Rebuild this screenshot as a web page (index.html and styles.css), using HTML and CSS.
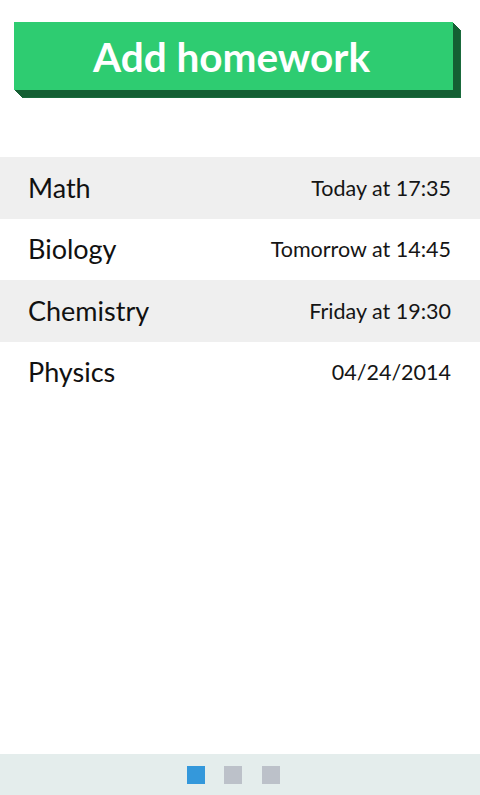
FILE: index.html
```html
<!DOCTYPE html>
<html>
<head>
<meta charset="utf-8">
<link rel="stylesheet" href="styles.css">
</head>
<body>
<div class="app">
  <div class="top">
    <button class="add-btn">Add homework</button>
  </div>
  <ul class="list">
    <li class="row alt"><span class="subject">Math</span><span class="due">Today at 17:35</span></li>
    <li class="row"><span class="subject">Biology</span><span class="due">Tomorrow at 14:45</span></li>
    <li class="row alt"><span class="subject">Chemistry</span><span class="due">Friday at 19:30</span></li>
    <li class="row"><span class="subject">Physics</span><span class="due">04/24/2014</span></li>
  </ul>
  <div class="spacer"></div>
  <div class="pager">
    <span class="dot active"></span>
    <span class="dot"></span>
    <span class="dot"></span>
  </div>
</div>
</body>
</html>
```
FILE: styles.css
```css
html, body {
  margin: 0;
  padding: 0;
  background: #ffffff;
}
body {
  font-family: Lato, "Open Sans", sans-serif;
  color: #111;
}
.app {
  width: 480px;
  height: 795px;
  display: flex;
  flex-direction: column;
}
.top {
  padding: 22px 27px 0 14px;
  height: 157px;
  box-sizing: border-box;
  flex-shrink: 0;
}
.add-btn {
  display: block;
  width: 439px;
  height: 68px;
  border: none;
  background: #2ecc71;
  color: #fff;
  font-family: Lato, sans-serif;
  font-weight: 700;
  font-size: 40.5px;
  padding: 1px 4px 0 0;
  cursor: pointer;
  box-shadow: 1px 1px 0 #145f33, 2px 2px 0 #145f33, 3px 3px 0 #145f33,
    4px 4px 0 #145f33, 5px 5px 0 #145f33, 6px 6px 0 #145f33,
    7px 7px 0 #145f33, 8px 8px 0 #1a6a3c;
}
.list {
  list-style: none;
  margin: 0;
  padding: 0;
}
.row {
  height: 61.5px;
  display: flex;
  align-items: center;
  justify-content: space-between;
  padding: 0 29px 0 28px;
}
.row.alt {
  background: #efefef;
}
.subject {
  font-size: 27px;
  padding-bottom: 1px;
}
.due {
  font-size: 21.5px;
  color: #151515;
}
.spacer {
  flex: 1;
}
.pager {
  height: 41px;
  flex-shrink: 0;
  background: #e4edec;
  display: flex;
  justify-content: center;
  align-items: center;
  gap: 19.5px;
  padding-right: 14px;
}
.dot {
  width: 18px;
  height: 18px;
  background: #bcc1c9;
}
.dot.active {
  background: #3498db;
}
```
